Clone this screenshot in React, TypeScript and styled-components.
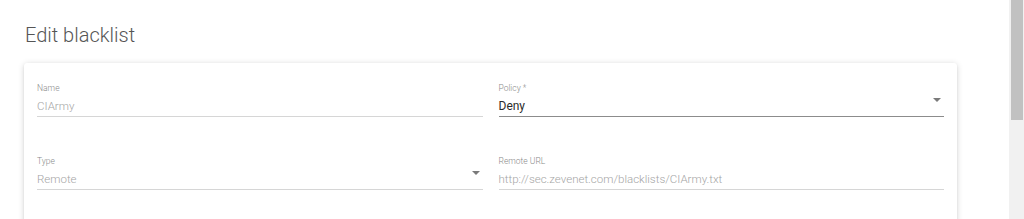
import React from 'react';
import styled, { createGlobalStyle } from 'styled-components';

const GlobalStyle = createGlobalStyle`
  html, body {
    margin: 0;
    padding: 0;
    background: #ffffff;
    overflow: hidden;
  }
  body {
    font-family: Roboto, "Liberation Sans", sans-serif;
  }
`;

type FieldData = {
  label: string;
  value: string;
  select?: boolean;
  active?: boolean;
};

const rows: FieldData[][] = [
  [
    { label: 'Name', value: 'CIArmy' },
    { label: 'Policy *', value: 'Deny', select: true, active: true }
  ],
  [
    { label: 'Type', value: 'Remote', select: true },
    { label: 'Remote URL', value: 'http://sec.zevenet.com/blacklists/CIArmy.txt' }
  ]
];

const App = () => {
  return (
    <>
      <GlobalStyle />
      <Page>
        <Main>
          <Title>Edit blacklist</Title>
          <Card>
            {rows.map((row, i) => (
              <FieldRow key={i}>
                {row.map((f) => (
                  <Field key={f.label} $active={f.active}>
                    <Label>{f.label}</Label>
                    <Value $active={f.active}>{f.value}</Value>
                    {f.select && (
                      <Arrow viewBox="7 10 10 5" aria-hidden="true">
                        <path d="M7 10l5 5 5-5z" />
                      </Arrow>
                    )}
                  </Field>
                ))}
              </FieldRow>
            ))}
          </Card>
        </Main>
        <ScrollTrack>
          <ScrollThumb />
        </ScrollTrack>
      </Page>
    </>
  );
};

const Page = styled.div`
  display: flex;
  height: 219px;
  overflow: hidden;
`;

const Main = styled.div`
  flex: 1;
  padding: 23px 52px 0 24px;
`;

const Title = styled.h1`
  margin: 0 0 15px 1px;
  font-size: 20px;
  line-height: 25px;
  font-weight: 300;
  color: #555;
`;

const Card = styled.div`
  background: #fff;
  border-radius: 3px;
  box-shadow: 0 1px 6px rgba(0, 0, 0, 0.16), 0 1px 2px rgba(0, 0, 0, 0.08);
  padding: 19px 13px 60px;
  display: flex;
  flex-direction: column;
  gap: 38px;
`;

const FieldRow = styled.div`
  display: grid;
  grid-template-columns: 1fr 1fr;
  gap: 16px;
`;

const Field = styled.div<{ $active?: boolean }>`
  position: relative;
  display: flex;
  flex-direction: column;
  padding-bottom: 1px;
  border-bottom: 1px solid ${(p) => (p.$active ? '#8c8c8c' : '#d6d6d6')};
`;

const Label = styled.span`
  font-size: 8.5px;
  line-height: 12px;
  font-weight: 300;
  color: #8a8a8a;
`;

const Value = styled.span<{ $active?: boolean }>`
  margin-top: 3px;
  font-size: ${(p) => (p.$active ? '12px' : '11.5px')};
  line-height: 18px;
  font-weight: ${(p) => (p.$active ? 400 : 300)};
  color: ${(p) => (p.$active ? '#2b2b2b' : '#a5a5a5')};
`;

const Arrow = styled.svg`
  position: absolute;
  right: 3px;
  top: 16px;
  width: 8px;
  height: 4px;
  fill: #7a7a7a;
`;

const ScrollTrack = styled.div`
  width: 15px;
  background: #f1f1f1;
  display: flex;
  justify-content: center;
`;

const ScrollThumb = styled.div`
  width: 12px;
  height: 120px;
  background: #c1c1c1;
`;

export default App;
